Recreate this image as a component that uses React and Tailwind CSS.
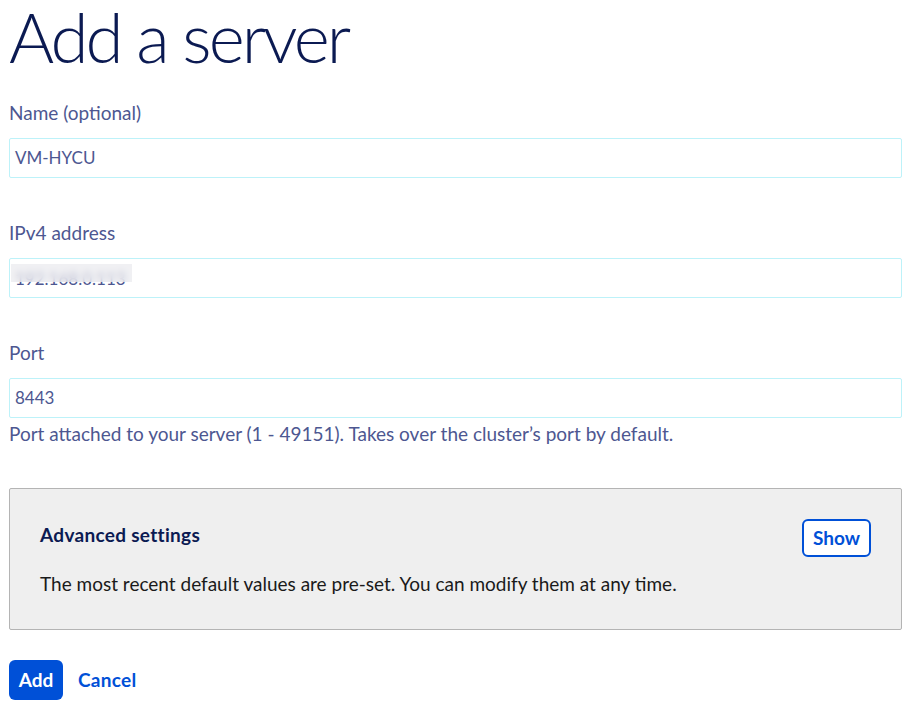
import React from "react";

function Field({ label, value, blurred, help }) {
  return (
    <div className="flex flex-col">
      <label className="text-[19px] leading-[24px] text-[#4d5791]">{label}</label>
      <div className="mt-[13px] h-[40px] border border-[#bdf2f9] rounded-[2px] flex items-center px-[5px] text-[17px] text-[#4d5791]">
        {blurred ? (
          <span className="relative mt-[2px] leading-[20px]">
            192.168.0.113
            <span className="absolute left-[-4px] right-[-6px] top-[-5px] bottom-[7px] backdrop-blur-[3px] bg-[#e9e9ee]/70"></span>
          </span>
        ) : (
          value
        )}
      </div>
      {help && (
        <p className="text-[19px] leading-[24px] mt-[4px] text-[#4d5791]">{help}</p>
      )}
    </div>
  );
}

export default function App() {
  return (
    <div
      className="w-[912px] h-[710px] bg-white overflow-hidden pl-[9px] pr-[10px]"
      style={{ fontFamily: "Lato, 'Noto Sans', sans-serif" }}
    >
      <h1 className="text-[69px] leading-[72px] font-light tracking-[-3px] text-[#0b1a52] pt-[1px]">Add a server</h1>
      <div className="mt-[28px] flex flex-col gap-[43px]">
        <Field label="Name (optional)" value="VM-HYCU" />
        <Field label="IPv4 address" blurred />
        <Field
          label="Port"
          value="8443"
          help="Port attached to your server (1 - 49151). Takes over the cluster’s port by default."
        />
      </div>
      <div className="mt-[42px] h-[142px] bg-[#efefef] border border-[#b4b4b4] rounded-[2px] pl-[30px] pr-[30px] flex flex-col">
        <div className="flex items-start justify-between mt-[30px]">
          <h2 className="mt-[4px] text-[19px] leading-[24px] font-bold text-[#0b1a52] tracking-[0.3px]">Advanced settings</h2>
          <button className="h-[38px] px-[9px] bg-white border-2 border-[#0050d7] rounded-[6px] text-[19px] font-bold text-[#0050d7]">
            Show
          </button>
        </div>
        <p className="mt-[15px] text-[19px] leading-[24px] text-[#1a1a1a]">
          The most recent default values are pre-set. You can modify them at any time.
        </p>
      </div>
      <div className="mt-[30px] flex items-center gap-[15px]">
        <button className="h-[40px] w-[54px] bg-[#0050d7] rounded-[6px] text-white text-[19px] font-bold">Add</button>
        <button className="text-[#0050d7] text-[19px] font-bold tracking-[0.3px]">Cancel</button>
      </div>
    </div>
  );
}
